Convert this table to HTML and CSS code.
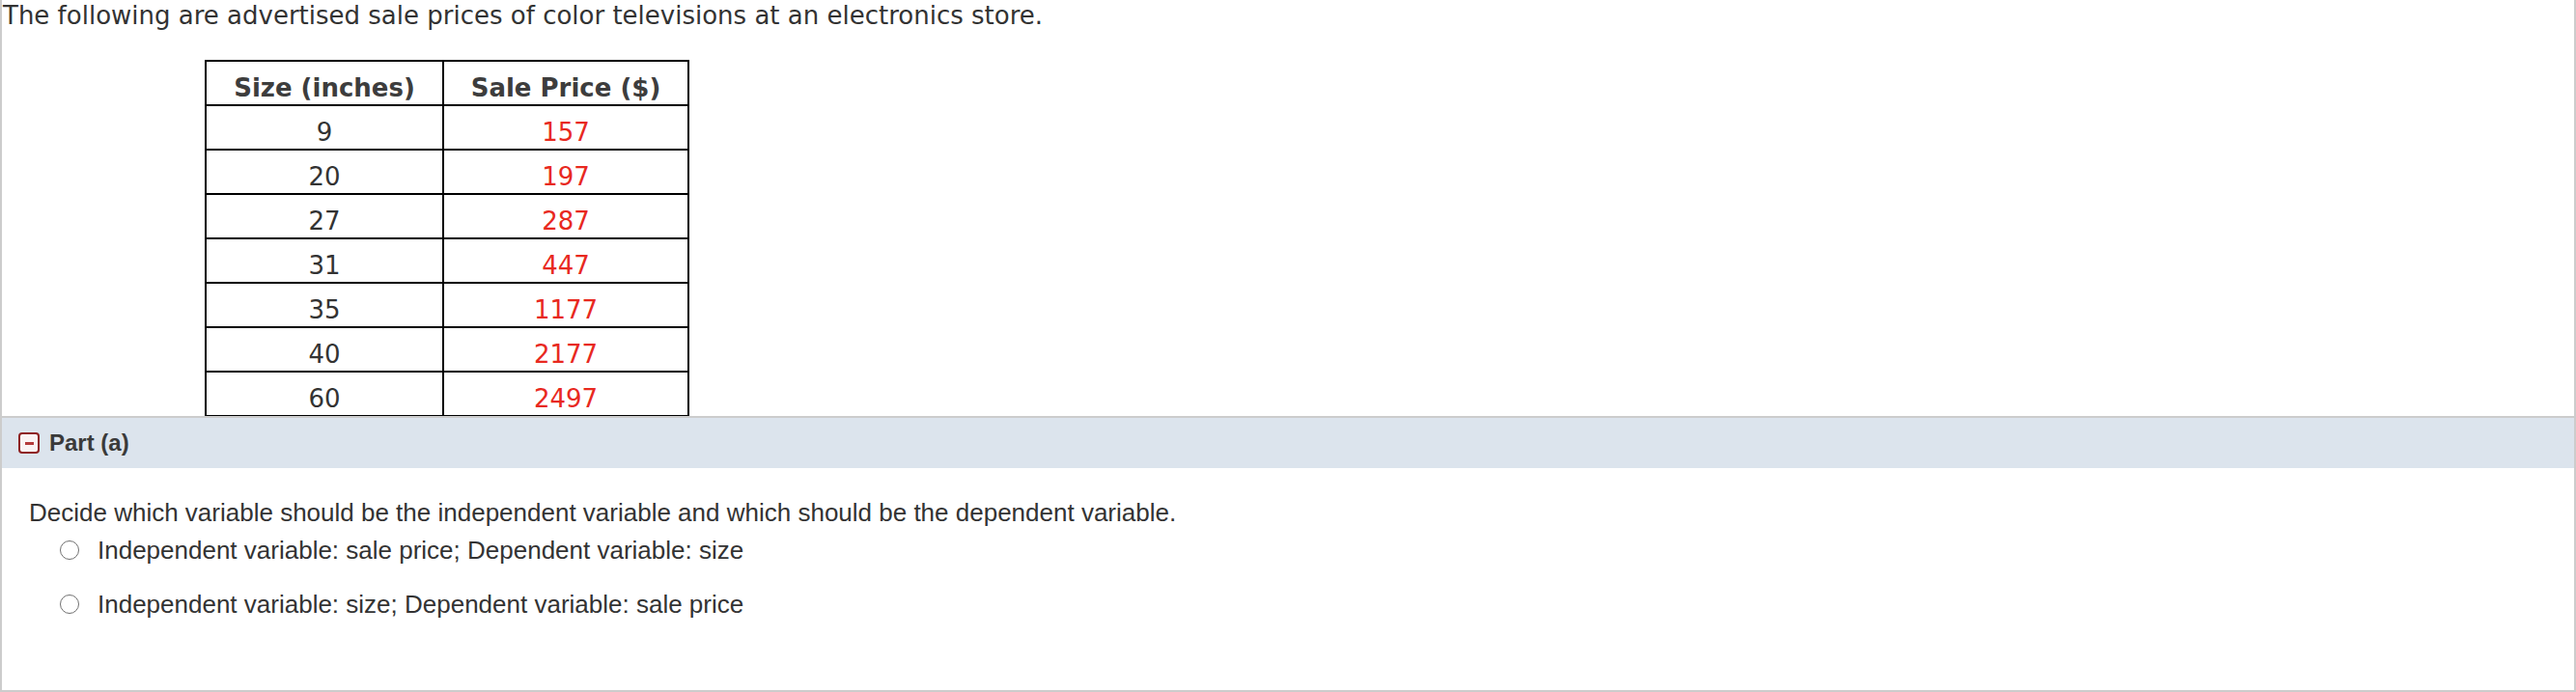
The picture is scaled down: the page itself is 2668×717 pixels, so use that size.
FILE: index.html
```html
<!DOCTYPE html>
<html>
<head>
<meta charset="utf-8">
<link rel="stylesheet" href="styles.css">
</head>
<body>
<div class="page">
  <div class="intro">
    <p class="lead">The following are advertised sale prices of color televisions at an electronics store.</p>
    <table class="data">
      <thead>
        <tr><th class="c1">Size (inches)</th><th class="c2">Sale Price ($)</th></tr>
      </thead>
      <tbody>
        <tr><td>9</td><td class="red">157</td></tr>
        <tr><td>20</td><td class="red">197</td></tr>
        <tr><td>27</td><td class="red">287</td></tr>
        <tr><td>31</td><td class="red">447</td></tr>
        <tr><td>35</td><td class="red">1177</td></tr>
        <tr><td>40</td><td class="red">2177</td></tr>
        <tr><td>60</td><td class="red">2497</td></tr>
      </tbody>
    </table>
  </div>
  <div class="part-head">
    <span class="toggle"><span class="dash"></span></span>
    <span class="part-title">Part (a)</span>
  </div>
  <div class="part-body">
    <p class="question">Decide which variable should be the independent variable and which should be the dependent variable.</p>
    <label class="option first"><span class="radio"></span><span>Independent variable: sale price; Dependent variable: size</span></label>
    <label class="option"><span class="radio"></span><span>Independent variable: size; Dependent variable: sale price</span></label>
  </div>
</div>
</body>
</html>
```

FILE: styles.css
```css
html, body {
  margin: 0;
  padding: 0;
  background: #ffffff;
}

.page {
  width: 2668px;
  height: 717px;
  box-sizing: border-box;
  border-left: 2px solid #cccccc;
  border-right: 2px solid #cccccc;
  border-bottom: 2px solid #cccccc;
  display: flex;
  flex-direction: column;
}

.intro {
  padding-top: 1px;
  height: 431px;
  box-sizing: border-box;
}

.lead {
  margin: 0;
  padding-left: 1px;
  font-family: "DejaVu Sans", Verdana, sans-serif;
  font-size: 26px;
  line-height: 30px;
  color: #333333;
}

.data {
  margin-top: 31px;
  margin-left: 210px;
  border-collapse: collapse;
  table-layout: fixed;
  width: 500px;
  font-family: "DejaVu Sans", Verdana, sans-serif;
  font-size: 26px;
  color: #333333;
}

.data th,
.data td {
  border: 2px solid #000000;
  text-align: center;
  line-height: 30px;
  padding: 12px 0 2px 0;
}

.data th {
  font-weight: bold;
  color: #3d3d3d;
}

.data .c1 { width: 244px; }
.data .c2 { width: 252px; }

.data .red {
  color: #e8291f;
}

.part-head {
  border-top: 2px solid #cccccc;
  background: #dce4ed;
  height: 52px;
  box-sizing: content-box;
  display: flex;
  align-items: center;
  padding-left: 17px;
  gap: 10px;
}

.toggle {
  width: 22px;
  height: 22px;
  box-sizing: border-box;
  border: 2px solid #8e2020;
  border-radius: 4px;
  background: #fbf3f3;
  display: flex;
  align-items: center;
  justify-content: center;
}

.dash {
  width: 9px;
  height: 3px;
  background: #b43a3a;
}

.part-title {
  font-family: "Liberation Sans", Arial, sans-serif;
  font-weight: bold;
  font-size: 24px;
  line-height: 26px;
  color: #3a3a3a;
}

.part-body {
  padding: 31px 0 0 28px;
  font-family: "Liberation Sans", Arial, sans-serif;
  font-size: 26px;
  line-height: 30px;
  color: #333333;
}

.question {
  margin: 0;
}

.option {
  display: flex;
  align-items: center;
  gap: 19px;
  margin-left: 32px;
}

.option.first {
  margin-top: 9px;
}

.option + .option {
  margin-top: 26px;
}

.radio {
  width: 20px;
  height: 20px;
  box-sizing: border-box;
  border: 1.5px solid #707070;
  border-radius: 50%;
  background: #ffffff;
  flex: none;
}
```
